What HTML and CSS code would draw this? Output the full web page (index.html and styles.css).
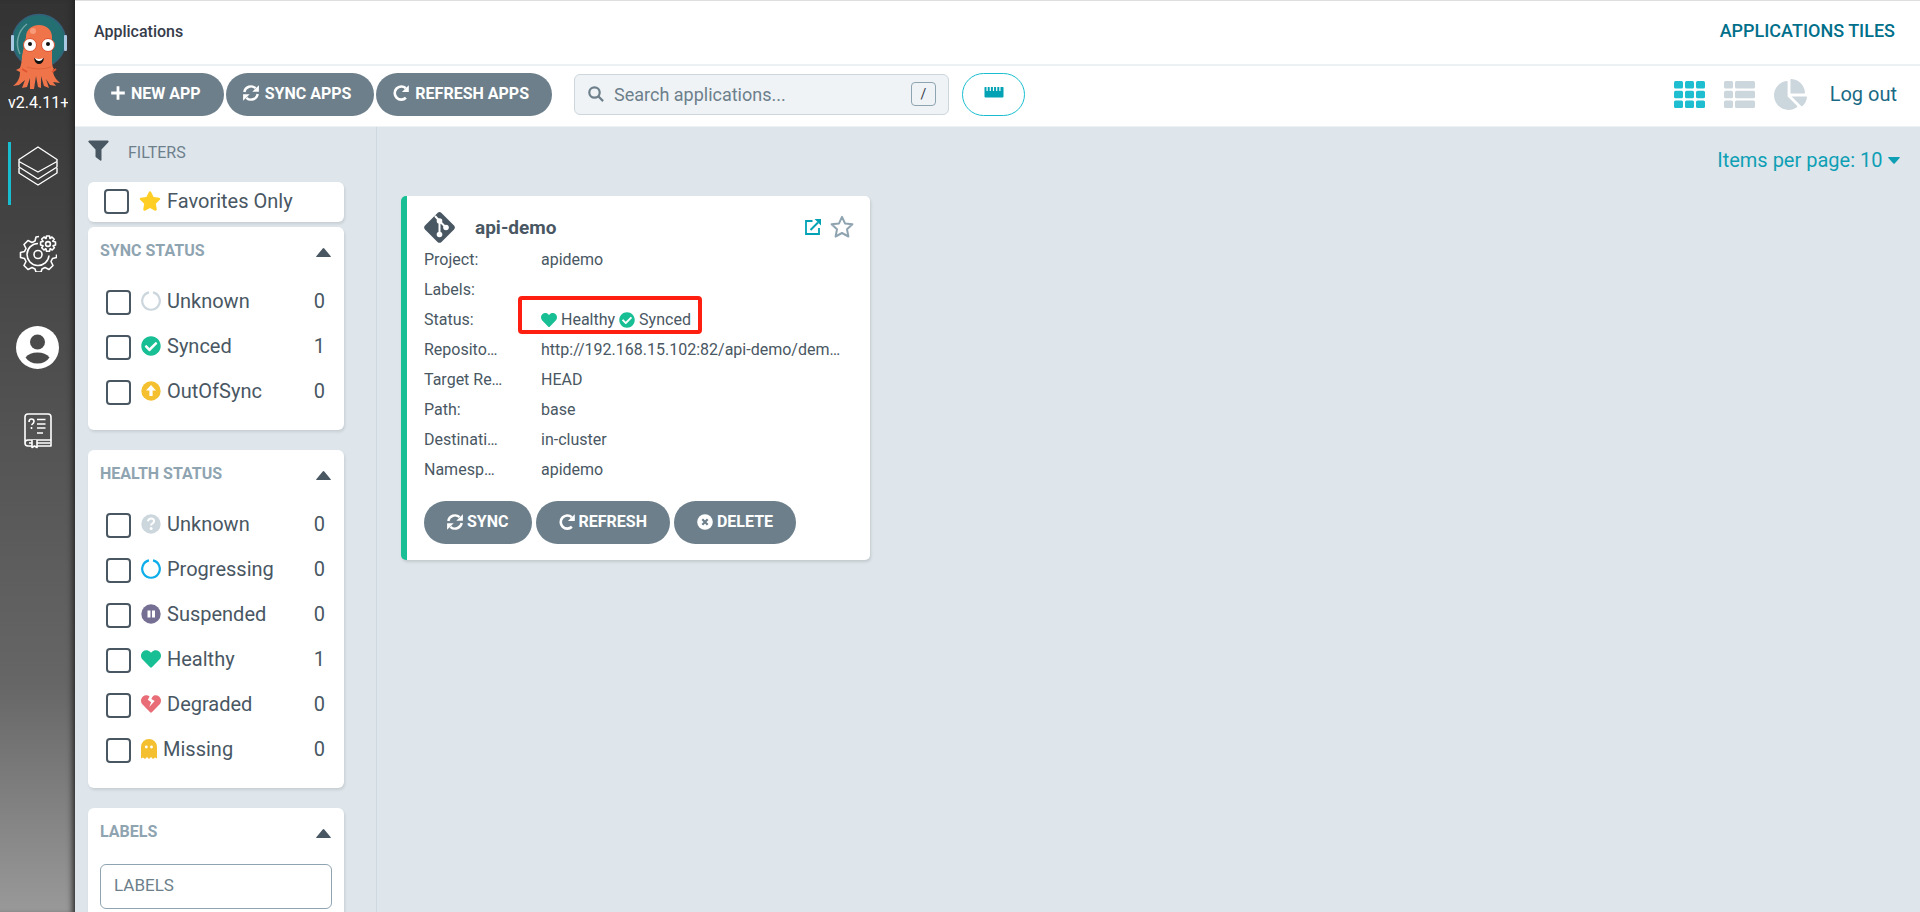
FILE: index.html
```
<!DOCTYPE html>
<html lang="en">
<head>
    <meta charset="UTF-8">
    <meta name="viewport" content="width=device-width, initial-scale=1.0">
    <title>Applications Tiles - Argo CD</title>
    <link rel="stylesheet" href="styles.css">
</head>
<body>

    <!-- shared icons -->
    <svg class="sprite" aria-hidden="true">
        <symbol id="heart" viewBox="0 0 512 512"><path d="M462.3 62.6C407.5 15.9 326 24.3 275.7 76.2L256 96.5l-19.7-20.3C186.1 24.3 104.5 15.9 49.7 62.6c-62.8 53.6-66.1 149.8-9.9 207.9l193.5 199.8c12.5 12.9 32.8 12.9 45.3 0l193.5-199.8c56.3-58.1 53-154.3-9.8-207.9z"/></symbol>
        <symbol id="star" viewBox="0 0 576 512"><path d="M259.3 17.8L194 150.2 47.9 171.5c-26.2 3.8-36.7 36.1-17.7 54.6l105.7 103-25 145.5c-4.5 26.3 23.2 46 46.4 33.7L288 439.6l130.7 68.7c23.2 12.2 50.9-7.4 46.4-33.7l-25-145.5 105.7-103c19-18.5 8.5-50.8-17.7-54.6L382 150.2 316.7 17.8c-11.7-23.6-45.6-23.9-57.4 0z"/></symbol>
        <symbol id="check" viewBox="0 0 512 512"><path d="M504 256c0 136.967-111.033 248-248 248S8 392.967 8 256 119.033 8 256 8s248 111.033 248 248zM227.314 387.314l184-184c6.248-6.248 6.248-16.379 0-22.627l-22.627-22.627c-6.248-6.249-16.379-6.249-22.628 0L216 308.118l-70.059-70.059c-6.248-6.248-16.379-6.248-22.628 0l-22.627 22.627c-6.248 6.248-6.248 16.379 0 22.627l104 104c6.249 6.249 16.379 6.249 22.628.001z"/></symbol>
        <symbol id="ring" viewBox="0 0 20 20"><path d="M12 1.400a8.800 8.800 0 1 1-4 0" fill="none" stroke="currentColor" stroke-width="2.200"/></symbol>
        <symbol id="sync" viewBox="0 0 16 16"><path d="M1.300 7A6.800 6.800 0 0 1 12.600 3.200M14.700 9A6.800 6.800 0 0 1 3.400 12.800" fill="none" stroke="currentColor" stroke-width="2.400"/><path d="M15.900.2v6.600H9.300zM.1 15.800V9.200h6.600z"/></symbol>
        <symbol id="redo" viewBox="0 0 16 16"><path d="M12.900 12.800A6.600 6.600 0 1 1 12.800 3.200" fill="none" stroke="currentColor" stroke-width="2.600"/><path d="M15.800.2v6.900H8.900z"/></symbol>
        <symbol id="caret-up" viewBox="0 0 15 9"><path d="M1 9h13q1.400 0 .5-1L8.300.500q-.8-.8-1.600 0L.5 8q-.9 1 .5 1z"/></symbol>
    </svg>

    <nav class="sidebar">
        <svg class="logo" viewBox="0 0 58 76">
            <circle cx="29" cy="28" r="26.500" fill="#246f71" stroke="#34607a" stroke-width="1.500"/>
            <path d="M10 41a24 24 0 0 1 7-30" fill="none" stroke="#6fa5a6" stroke-width="1.500"/>
            <rect x="1" y="22" width="3" height="16" rx="1" fill="#a9c8e4"/>
            <rect x="54" y="22" width="3" height="16" rx="1" fill="#a9c8e4"/>
            <path fill="#f0744a" d="M16 24C16 8 42 8 42 24v19c0 8 0 10 2 13l-1 1c0 6 3 9 7 13l-7-1 3 4-6-1-4-6 3 9-5-2-3-10v12l-3-1-2-11-2 13-4 1 0-12-3 9-5 1 3-8-6 5-6 1c5-4 7-8 7-14l-4-2 4-2c1-3 2-7 2-12z"/>
            <path d="M12 56l5 3M46 56l-4 3" stroke="#e0552f" stroke-width="2" fill="none"/>
            <path d="M17 54q12 4 24 0" stroke="#e2643c" stroke-width="1" fill="none"/>
            <circle cx="23" cy="18" r="3" fill="#f79b7b"/>
            <circle cx="20" cy="32" r="6.500" fill="#fff" stroke="#d9502f"/>
            <circle cx="38" cy="32" r="6.500" fill="#fff" stroke="#d9502f"/>
            <circle cx="20" cy="31" r="2" fill="#111"/>
            <circle cx="38" cy="31" r="2" fill="#111"/>
            <path d="M24 45q5 3 10 0-1 6-5 6t-5-6z" fill="#111"/>
            <path d="M25 45q4 2 8 0-1 3-4 3t-4-3z" fill="#fff"/>
        </svg>
        <div class="version">v2.4.11+</div>
        <a class="nav-item active" href="#" aria-label="Applications">
            <svg class="line" width="42" height="42" viewBox="0 0 42 42" stroke-width="1.400">
                <path d="M21 2L2 14.500v2L21 27l19-10.500v-2z"/>
                <path d="M2 17v5l19 12 19-12v-5M2 23v5l19 12 19-12v-5"/>
            </svg>
        </a>
        <a class="nav-item" href="#" aria-label="Settings">
            <svg class="line" width="38" height="38" viewBox="0 0 38 38" stroke-width="1.600">
                <path d="M20 2.500l-3 .500-1 4-3 1.500-4-2-4 4 2 4-1.500 3-4 1v5l4 1 1.500 3-2 4 4 4 4-2 3 1.500 1 3h5l1-3 3-1.500 4 2 4-4-2-4 1.500-3 4-1v-3"/>
                <path d="M19 9.500a11 11 0 1 0 11 12"/>
                <circle cx="19" cy="20.500" r="4"/>
                <circle cx="29" cy="10" r="2.400"/>
                <path d="M27.500 2h3l.500 2.500 2-1.500 2.200 2.200-1.500 2L36.500 8v3l-2.500.8 1.400 2-2.200 2.200-2-1.300-.7 2.500h-3l-.600-2.500-2 1.300-2.200-2.200 1.400-2-2.500-.8V8l2.500-.6-1.400-2.200L25 3l2 1.500z"/>
            </svg>
        </a>
        <a class="nav-item" href="#" aria-label="User info">
            <svg width="43" height="43" viewBox="0 0 43 43">
                <circle cx="21.500" cy="21.500" r="21.500" fill="#fff"/>
                <circle cx="21.500" cy="16" r="7.500" fill="#4a4a4a"/>
                <path d="M9.500 31.500q4-5 12-5t12 5q-4 6-12 6t-12-6z" fill="#4a4a4a"/>
            </svg>
        </a>
        <a class="nav-item" href="#" aria-label="Documentation">
            <svg class="line" width="28" height="36" viewBox="0 0 28 36" stroke-width="1.600">
                <path d="M8 33H4q-3 0-3-3V4q0-3 3-3h20q3 0 3 3v29H13M1 30q0-3 3-3h23M5 30h21"/>
                <path d="M8 27v7.500l2.500-1.500 2.500 1.500V27" fill="#4f4f4f"/>
                <path d="M13 6.500h8.500M13 11h8.500M13 15h8.500M13 20h6M5 9q0-3 2.500-3T10 8.500Q10 10 7.500 12M7.500 14v2"/>
            </svg>
        </a>
    </nav>

    <div class="page">
        <header class="topbar">
            <span class="crumb">Applications</span>
            <span class="page-title">APPLICATIONS TILES</span>
        </header>

        <div class="toolbar">
            <div class="actions">
                <button class="btn" type="button">
                    <svg class="ico plus" viewBox="0 0 14 16"><path d="M5.600 1.200h2.800v5.400h5.400v2.800H8.400v5.400H5.600V9.400H.2V6.600h5.400z"/></svg> NEW APP
                </button>
                <button class="btn" type="button"><svg class="ico"><use href="#sync"/></svg> SYNC APPS</button>
                <button class="btn" type="button"><svg class="ico"><use href="#redo"/></svg> REFRESH APPS</button>
            </div>
            <div class="search">
                <svg class="glass" width="16" height="16" viewBox="0 0 16 16"><circle cx="6.500" cy="6.500" r="5.200"/><path d="M10.500 10.500l4.600 4.600"/></svg>
                <input type="text" placeholder="Search applications..." aria-label="Search applications">
                <kbd>/</kbd>
            </div>
            <button class="btn-outline" type="button" aria-label="Compact view">
                <svg width="20" height="12" viewBox="0 0 20 12"><path d="M1 1h1.500v4h1.200V1h2v4h1.200V1h2v4h1.200V1h2v4h1.200V1h2v4h1.200V1H19q.5 0 .5.500v9q0 1-1 1h-17q-1 0-1-1v-9Q.5 1 1 1z" fill="#00a2b3"/></svg>
            </button>
            <div class="views">
                <a class="view selected" href="#" aria-label="Tiles">
                    <svg width="31" height="27" viewBox="0 0 31 27"><g id="rows"><rect width="9" height="7.500" rx="1.500"/><rect y="9.700" width="9" height="7.500" rx="1.500"/><rect y="19.400" width="9" height="7.500" rx="1.500"/></g><use href="#rows" x="11"/><use href="#rows" x="22"/></svg>
                </a>
                <a class="view" href="#" aria-label="List">
                    <svg width="31" height="27" viewBox="0 0 31 27"><use href="#rows"/><rect x="11" width="20" height="7.500" rx="1.500"/><rect x="11" y="9.700" width="20" height="7.500" rx="1.500"/><rect x="11" y="19.400" width="20" height="7.500" rx="1.500"/></svg>
                </a>
                <a class="view" href="#" aria-label="Summary">
                    <svg width="33" height="31" viewBox="0 0 544 512"><path d="M527.79 288H290.5l158.03 158.03c6.04 6.04 15.98 6.53 22.19.68 38.7-36.46 65.32-85.61 73.13-140.86 1.34-9.46-6.51-17.85-16.06-17.85zm-15.83-64.8C503.72 103.74 408.26 8.28 288.8.04 279.68-.59 272 7.1 272 16.24V240h223.77c9.14 0 16.82-7.68 16.19-16.8zM224 288V50.71c0-9.55-8.39-17.4-17.84-16.06C86.99 51.49-4.1 155.6.14 280.37 4.5 408.51 114.83 513.59 243.03 511.98c50.4-.63 96.97-16.87 135.26-44.03 7.9-5.6 8.42-17.23 1.57-24.08L224 288z"/></svg>
                </a>
                <a class="logout" href="#">Log out</a>
            </div>
        </div>

        <div class="content">
            <aside class="filters">
                <div class="filters-title">
                    <svg width="21" height="21" viewBox="0 0 21 21"><path d="M1.200.500h18.600q1.400.500.500 1.800L13.500 9.500V20q-.3 1-1.300.500l-4-3q-.7-.5-.7-1V9.500L.7 2.300Q-.2 1 1.200.500z"/></svg>
                    <span>FILTERS</span>
                </div>
                <div class="box favorites">
                    <label class="row">
                        <input type="checkbox">
                        <svg class="st star"><use href="#star"/></svg>
                        <span>Favorites Only</span>
                    </label>
                </div>

                <section class="box">
                    <div class="box-head">SYNC STATUS <svg width="15" height="9"><use href="#caret-up"/></svg></div>
                    <label class="row"><input type="checkbox"><svg class="st grey"><use href="#ring"/></svg><span>Unknown</span><span class="count">0</span></label>
                    <label class="row"><input type="checkbox"><svg class="st green"><use href="#check"/></svg><span>Synced</span><span class="count">1</span></label>
                    <label class="row"><input type="checkbox"><svg class="st yellow" viewBox="0 0 20 20"><circle cx="10" cy="10" r="9.700"/><path d="M10 4l5 5.500h-3.400V15H8.400V9.500H5z" fill="#fff"/></svg><span>OutOfSync</span><span class="count">0</span></label>
                </section>

                <section class="box">
                    <div class="box-head">HEALTH STATUS <svg width="15" height="9"><use href="#caret-up"/></svg></div>
                    <label class="row"><input type="checkbox"><svg class="st grey" viewBox="0 0 20 20"><circle cx="10" cy="10" r="9.700"/><path d="M6.800 7.300q.8-2.800 3.300-2.800 3 0 3 2.600 0 1.400-1.500 2.200T10.100 11.500" fill="none" stroke="#fff" stroke-width="2"/><circle cx="10.100" cy="14.600" r="1.500" fill="#fff"/></svg><span>Unknown</span><span class="count">0</span></label>
                    <label class="row"><input type="checkbox"><svg class="st blue"><use href="#ring"/></svg><span>Progressing</span><span class="count">0</span></label>
                    <label class="row"><input type="checkbox"><svg class="st purple" viewBox="0 0 20 20"><circle cx="10" cy="10" r="9.700"/><path d="M6.500 6.500h3v7h-3zM11 6.500h3v7h-3z" fill="#fff"/></svg><span>Suspended</span><span class="count">0</span></label>
                    <label class="row"><input type="checkbox"><svg class="st green"><use href="#heart"/></svg><span>Healthy</span><span class="count">1</span></label>
                    <label class="row"><input type="checkbox"><svg class="st red" viewBox="0 0 512 512"><use href="#heart"/><path d="M225 50l-50 100 85 60-50 120 140-150-85-55 40-75z" fill="#fff"/></svg><span>Degraded</span><span class="count">0</span></label>
                    <label class="row"><input type="checkbox"><svg class="st yellow ghost" viewBox="0 0 16 20"><path d="M0 8a8 8 0 0 1 16 0v11.500l-2-1-2 1.500-2-2-2 2-2-2-2 2-2-1.500-2 1z"/><circle cx="5.300" cy="8" r="1.400" fill="#fff"/><circle cx="10.500" cy="8" r="1.400" fill="#fff"/></svg><span>Missing</span><span class="count">0</span></label>
                </section>

                <section class="box">
                    <div class="box-head">LABELS <svg width="15" height="9"><use href="#caret-up"/></svg></div>
                    <input class="label-input" type="text" placeholder="LABELS" aria-label="Labels">
                </section>
            </aside>

            <main class="tiles">
                <div class="paging">
                    <label for="perPage">Items per page:</label>
                    <select id="perPage">
                        <option selected>10</option>
                        <option>15</option>
                        <option>20</option>
                    </select>
                    <svg width="12" height="7" viewBox="0 0 12 7"><path d="M.8 0h10.400q1.200 0 .4 1L6.700 6.500q-.7.700-1.400 0L.4 1Q-.4 0 .8 0z"/></svg>
                </div>

                <article class="tile">
                    <div class="tile-head">
                        <svg width="31" height="31" viewBox="0 0 31 31">
                            <path d="M13.500 1q2-1.800 4 0L30 13.500q1.700 2 0 4L17.500 30q-2 1.700-4 0L1 17.500q-1.700-2 0-4z" fill="#495763"/>
                            <path d="M11 4l4.500 5v13M15.500 9l6 6" stroke="#fff" stroke-width="2" fill="none"/>
                            <circle cx="15.500" cy="9" r="2.800" fill="#fff"/><circle cx="15.500" cy="22.500" r="2.800" fill="#fff"/><circle cx="22" cy="15.500" r="2.800" fill="#fff"/>
                        </svg>
                        <h2>api-demo</h2>
                        <a href="#" aria-label="Open application">
                            <svg width="16" height="16" viewBox="0 0 16 16"><path d="M7.500 2H1v13h13V9" fill="none" stroke="#00a2b3" stroke-width="1.800"/><path d="M5.500 11L13 3.500" stroke="#00a2b3" stroke-width="2"/><path d="M9.500 0H16v6.500z" fill="#00a2b3"/></svg>
                        </a>
                        <button class="fav" type="button" aria-label="Add to favorites">
                            <svg width="24" height="24" viewBox="0 0 24 24"><path d="M12 1.800l3 6.600 7.400.9-5.400 5 1.400 7.200-6.400-3.500-6.400 3.500L7 14.300l-5.400-5L9 8.400z"/></svg>
                        </button>
                    </div>
                    <dl>
                        <dt>Project:</dt><dd>apidemo</dd>
                        <dt>Labels:</dt><dd></dd>
                        <dt>Status:</dt>
                        <dd class="status">
                            <svg class="green"><use href="#heart"/></svg>Healthy
                            <svg class="green"><use href="#check"/></svg>Synced
                        </dd>
                        <dt>Repository:</dt><dd>http://192.168.15.102:82/api-demo/demo.git</dd>
                        <dt>Target Revision:</dt><dd>HEAD</dd>
                        <dt>Path:</dt><dd>base</dd>
                        <dt>Destination:</dt><dd>in-cluster</dd>
                        <dt>Namespace:</dt><dd>apidemo</dd>
                    </dl>
                    <div class="tile-actions">
                        <button class="btn" type="button"><svg class="ico"><use href="#sync"/></svg> SYNC</button>
                        <button class="btn" type="button"><svg class="ico"><use href="#redo"/></svg> REFRESH</button>
                        <button class="btn" type="button"><svg class="ico" viewBox="0 0 16 16"><circle cx="8" cy="8" r="7.800"/><path d="M5.300 5.300l5.400 5.400M10.700 5.300l-5.400 5.400" stroke="#6d7f8b" stroke-width="2.200"/></svg> DELETE</button>
                    </div>
                </article>
            </main>
        </div>
    </div>

</body>
</html>
```
FILE: styles.css
```
* {
    box-sizing: border-box;
}
body {
    margin: 0;
    display: flex;
    height: 100vh;
    overflow: hidden;
    font-family: Roboto, sans-serif;
    font-size: 16px;
    color: #495763;
    background: #dee6eb;
}
svg {
    display: block;
    flex-shrink: 0;
    fill: currentColor;
}
a {
    color: inherit;
    text-decoration: none;
}
button, input, select {
    font: inherit;
    color: inherit;
}
.sprite {
    position: absolute;
    width: 0;
    height: 0;
}

/* sidebar */
.sidebar {
    width: 75px;
    flex-shrink: 0;
    padding-top: 13px;
    background: linear-gradient(#333 0%, #3c3c3c 15%, #555 50%, #666 75%, #999 100%);
    box-shadow: inset -6px 0 6px -4px #222;
}
.logo {
    width: 58px;
    height: 76px;
    margin-left: 10px;
}
.version {
    margin: 4px 7px 0 8px;
    height: 20px;
    line-height: 20px;
    color: #fff;
    overflow: hidden;
    white-space: nowrap;
}
.nav-item {
    display: flex;
    align-items: center;
    justify-content: center;
    height: 63px;
    margin: 16px 0 0 8px;
    padding-right: 11px;
    border-left: 3px solid transparent;
}
.nav-item.active {
    margin-top: 29px;
    padding-bottom: 16px;
    border-color: #18becf;
}
.nav-item:nth-of-type(3) {
    margin: 32px 0 20px 8px;
}
.line {
    fill: none;
    stroke: #fff;
    stroke-linejoin: round;
}

/* top bars */
.page {
    flex: 1;
    min-width: 0;
    display: flex;
    flex-direction: column;
}
.topbar {
    display: flex;
    justify-content: space-between;
    align-items: center;
    height: 66px;
    padding: 0 25px 3px 19px;
    background: #fff;
    border-top: 1px solid #dedede;
    border-bottom: 2px solid #ecf1f4;
}
.crumb {
    color: #363c4a;
    font-weight: 500;
}
.page-title {
    padding-bottom: 2px;
    color: #006f8a;
    font-size: 18px;
    font-weight: 500;
}
.toolbar {
    display: flex;
    align-items: center;
    height: 61px;
    padding: 0 23px 4px 19px;
    background: #fff;
    border-bottom: 1px solid #ecf1f4;
}
.actions {
    display: flex;
    gap: 2px;
}
.btn {
    display: flex;
    align-items: center;
    gap: 6px;
    height: 43px;
    padding: 0 23px 2px 17px;
    border: 0;
    border-radius: 22px;
    background: #6d7f8b;
    color: #fff;
    font-weight: 700;
    white-space: nowrap;
}
.ico {
    width: 16px;
    height: 16px;
}
.ico.plus {
    width: 14px;
}
.search {
    display: flex;
    align-items: center;
    width: 375px;
    height: 41px;
    margin: 0 13px 0 22px;
    padding: 0 12px 0 13px;
    gap: 10px;
    background: #eff3f6;
    border: 1px solid #ccd6dd;
    border-radius: 6px;
}
.glass {
    fill: none;
    stroke: #6d7f8b;
    stroke-width: 2.2;
}
.search input {
    flex: 1;
    min-width: 0;
    padding: 0;
    border: 0;
    outline: 0;
    background: none;
    font-size: 18px;
}
.search input::placeholder {
    color: #6d7f8b;
}
.search kbd {
    width: 25px;
    height: 24px;
    border: 1px solid #8fa4b1;
    border-radius: 4px;
    font: 14px/22px Roboto, sans-serif;
    text-align: center;
    color: #363c4a;
}
.btn-outline {
    display: flex;
    align-items: center;
    justify-content: center;
    width: 63px;
    height: 43px;
    padding: 0 0 4px;
    border: 1px solid #18becf;
    border-radius: 22px;
    background: #fff;
}
.views {
    display: flex;
    align-items: center;
    gap: 19px;
    margin-left: auto;
}
.view {
    color: #ccd6dd;
}
.view.selected {
    color: #1fbdd0;
}
.logout {
    margin-left: 4px;
    font-size: 20px;
    color: #1a6a85;
}

/* filters */
.content {
    flex: 1;
    min-height: 0;
    display: flex;
}
.filters {
    width: 302px;
    flex-shrink: 0;
    padding: 12px 32px 20px 13px;
    border-right: 1px solid #cfd8df;
    overflow: hidden;
}
.filters-title {
    display: flex;
    align-items: center;
    gap: 19px;
    height: 26px;
    margin-bottom: 17px;
}
.filters-title svg {
    margin-bottom: 4px;
}
.filters-title span {
    color: #6d7f8b;
}
.box {
    margin-bottom: 20px;
    padding: 12px 12px 15px;
    background: #fff;
    border-radius: 6px;
    box-shadow: 1px 2px 3px rgba(0, 0, 0, 0.1);
}
.box-head {
    display: flex;
    align-items: center;
    justify-content: space-between;
    height: 22px;
    margin-bottom: 19px;
    padding-right: 1px;
    color: #8fa4b1;
    font-weight: 700;
}
.box-head svg {
    margin-top: 4px;
    color: #495763;
}
.row {
    display: flex;
    align-items: center;
    height: 45px;
    padding: 0 7px 0 6px;
    font-size: 20px;
}
.row input {
    appearance: none;
    width: 25px;
    height: 25px;
    margin: 0 10px 0 0;
    border: 2px solid #495763;
    border-radius: 4px;
    background: #fff;
}
.row span {
    padding-bottom: 3px;
}
.st {
    width: 20px;
    height: 20px;
    margin: 0 6px 3px 0;
}
.ghost {
    width: 16px;
}
.count {
    margin-left: auto;
}
.favorites {
    height: 40px;
    margin-bottom: 5px;
    padding: 0 10px;
}
.favorites .row {
    height: 38px;
}
.favorites .row span {
    padding-bottom: 0;
}
.st.star {
    width: 22px;
    color: #ffce25;
    margin-bottom: 0;
}
.green {
    color: #18be94;
}
.grey {
    color: #ccd6dd;
}
.yellow {
    color: #f4c030;
}
.blue {
    color: #0dadea;
}
.purple {
    color: #766f94;
}
.red {
    color: #e96d76;
}
.label-input {
    display: block;
    width: 100%;
    height: 45px;
    margin-top: 22px;
    padding: 0 13px 3px;
    border: 1px solid #8fa4b1;
    border-radius: 6px;
    background: #fff;
    font-size: 17px;
}
.label-input::placeholder {
    color: #6d7f8b;
}

/* tiles */
.tiles {
    flex: 1;
    min-width: 0;
    padding: 20px 20px 0 24px;
}
.paging {
    display: flex;
    align-items: center;
    justify-content: flex-end;
    gap: 5px;
    height: 26px;
    margin-bottom: 23px;
    font-size: 20px;
    color: #0f9fb5;
}
.paging select {
    appearance: none;
    padding: 0;
    border: 0;
    background: none;
}
.tile {
    width: 469px;
    padding: 15px 16px 16px 17px;
    background: #fff;
    border-left: 6px solid #18be94;
    border-radius: 5px;
    box-shadow: 1px 2px 3px rgba(0, 0, 0, 0.12);
}
.tile-head {
    display: flex;
    align-items: center;
    height: 34px;
    padding-bottom: 2px;
}
.tile-head h2 {
    margin: 0 auto 0 20px;
    font-size: 19px;
    font-weight: 700;
}
.fav {
    margin-left: 9px;
    padding: 0;
    border: 0;
    background: none;
}
.fav svg {
    fill: none;
    stroke: #8fa4b1;
    stroke-width: 2;
    stroke-linejoin: round;
}
dl {
    display: grid;
    grid-template-columns: 79px 1fr;
    grid-auto-rows: 30px;
    column-gap: 38px;
    line-height: 30px;
    margin: 0 8px 16px 0;
}
dt, dd {
    margin: 0;
    overflow: hidden;
    text-overflow: ellipsis;
    white-space: nowrap;
}
.status {
    display: flex;
    align-items: center;
    gap: 4px;
    justify-self: start;
    overflow: visible;
    position: relative;
}
.status svg {
    width: 16px;
    height: 16px;
}
/* red frame round the status */
.status::before {
    content: "";
    position: absolute;
    inset: -9px -11px 1px -23px;
    border: 4px solid #ff1f10;
    border-radius: 4px;
}
.tile-actions {
    display: flex;
    gap: 4px;
}
.tile-actions .btn {
    gap: 4px;
    padding: 0 23px 2px;
}
```
